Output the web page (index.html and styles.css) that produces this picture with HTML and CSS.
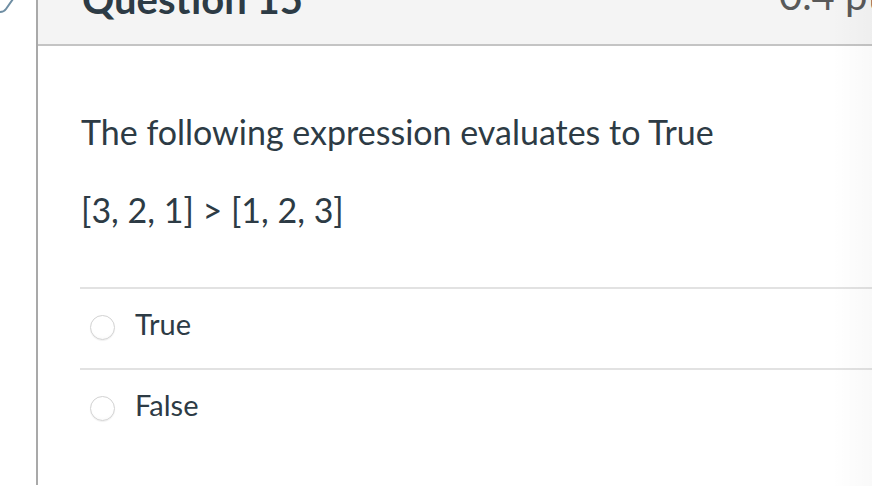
FILE: index.html
```html
<!DOCTYPE html>
<html lang="en">
<head>
<meta charset="utf-8">
<title>Question 15</title>
<link rel="stylesheet" href="styles.css">
</head>
<body>
<div class="page">
  <div class="gutter">
    <svg class="flag" width="36" height="20" viewBox="0 0 36 20" aria-hidden="true">
      <path d="M13 -1 L6 9 Q4 12 0 12" fill="none" stroke="#6f8ea3" stroke-width="2" stroke-linecap="round"/>
    </svg>
  </div>
  <div class="question">
    <div class="header">
      <span class="name">Question 15</span>
      <span class="points">0.4 pts</span>
    </div>
    <div class="body">
      <p class="text">The following expression evaluates to True</p>
      <p class="text">[3, 2, 1] &gt; [1, 2, 3]</p>
      <div class="answers">
        <label class="answer"><span class="radio"></span><span class="label">True</span></label>
        <label class="answer"><span class="radio"></span><span class="label">False</span></label>
      </div>
    </div>
  </div>
  <div class="shade"></div>
</div>
</body>
</html>
```

FILE: styles.css
```css
html, body {
  margin: 0;
  padding: 0;
  background: #ffffff;
}

body {
  width: 872px;
  height: 486px;
  overflow: hidden;
  font-family: Lato, "Open Sans", "Liberation Sans", sans-serif;
  color: #2d3b45;
}

.page {
  position: relative;
  display: flex;
  height: 486px;
}

.gutter {
  width: 36px;
  flex: 0 0 36px;
}

.flag {
  display: block;
}

.question {
  flex: 0 0 980px;
  border-left: 2px solid #a9a9a9;
  height: 485px;
}

.header {
  display: flex;
  align-items: flex-start;
  height: 44px;
  background: #f4f4f4;
  border-bottom: 2px solid #c4c4c4;
  padding-left: 44px;
  overflow: hidden;
}

.name {
  font-size: 40px;
  line-height: 40px;
  font-weight: 700;
  color: #2d3b45;
  margin-top: -21px;
  white-space: nowrap;
}

.points {
  font-size: 40px;
  line-height: 40px;
  font-weight: 400;
  color: #595959;
  margin-top: -25px;
  margin-left: 476px;
  white-space: nowrap;
}

.body {
  padding: 61px 0 0 43px;
}

.text {
  margin: 0 0 28px;
  font-size: 34px;
  line-height: 50px;
  white-space: nowrap;
}

.answers {
  margin-top: 52px;
  margin-left: -1px;
}

.answer {
  display: flex;
  align-items: flex-start;
  height: 79px;
  border-top: 2px solid #e2e2e2;
}

.radio {
  width: 23px;
  height: 23px;
  border-radius: 50%;
  border: 1px solid #d2d2d2;
  background: radial-gradient(circle at 50% 40%, #ffffff 60%, #f3f3f3 100%);
  box-shadow: 0 1px 1px rgba(0, 0, 0, 0.06);
  margin: 26px 20px 0 10px;
}

.label {
  font-size: 29px;
  line-height: 42px;
  margin-top: 14px;
  color: #2d3b45;
}

.shade {
  position: absolute;
  top: 0;
  right: 0;
  width: 40px;
  height: 486px;
  background: linear-gradient(to right, rgba(0, 0, 0, 0), rgba(0, 0, 0, 0.025));
  pointer-events: none;
}
```
